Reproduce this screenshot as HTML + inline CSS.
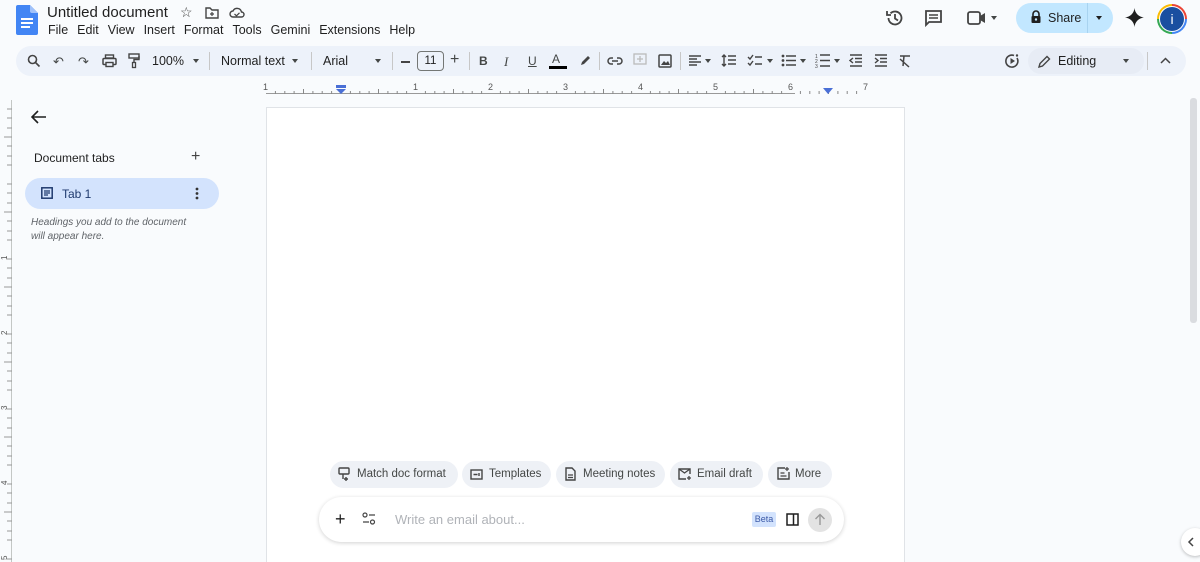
<!DOCTYPE html>
<html><head><meta charset="utf-8"><style>
*{margin:0;padding:0;box-sizing:border-box}
html,body{width:1200px;height:562px;overflow:hidden}
body{background:#f9fbfd;font-family:"Liberation Sans",sans-serif;color:#1f1f1f;position:relative}
.a{position:absolute}
.menu span{margin-right:9px}
.tb{position:absolute;top:46px;left:16px;width:1170px;height:30px;background:#edf2fa;border-radius:15px}
.t{position:absolute;font-size:12.5px;color:#444746;top:54px}
.sep{position:absolute;top:52px;width:1px;height:18px;background:#c7c7c7}
.dd{position:absolute;top:59px;width:0;height:0;border-left:3.5px solid transparent;border-right:3.5px solid transparent;border-top:4px solid #444746}
.chip{position:absolute;top:461px;height:27px;border-radius:14px;background:#eef1f6;font-size:11.5px;color:#444746;line-height:27px;padding-left:27px}
.rn{position:absolute;top:82px;font-size:9px;color:#555}
</style></head><body>
<svg class="a" style="left:16px;top:5px" width="22" height="30" viewBox="0 0 22 30"><path d="M2 0h12l8 8v20a2 2 0 0 1-2 2H2a2 2 0 0 1-2-2V2a2 2 0 0 1 2-2z" fill="#4285f4"/><path d="M14 0v6a2 2 0 0 0 2 2h6z" fill="#a1c2fa"/><rect x="5" y="13" width="12" height="2" fill="#fff"/><rect x="5" y="17" width="12" height="2" fill="#fff"/><rect x="5" y="21" width="9" height="2" fill="#fff"/></svg>
<div class="a" style="left:47px;top:4px;font-size:15px;color:#1f1f1f">Untitled document</div>
<div class="a" style="left:180px;top:4px;font-size:14px;color:#444">☆</div>
<svg class="a" style="left:205px;top:7px" width="14" height="12"><path d="M1 1h4l2 2h6v8H1z" fill="none" stroke="#444" stroke-width="1.4"/><path d="M7 5v4M5 7h4" stroke="#444" stroke-width="1.2"/></svg>
<svg class="a" style="left:229px;top:6px" width="16" height="13"><path d="M4 11a3 3 0 0 1 0-6 4.5 4.5 0 0 1 8.5 1 2.5 2.5 0 0 1 0 5z" fill="none" stroke="#444" stroke-width="1.4"/><path d="M5.5 8l2 1.8 3-3" fill="none" stroke="#444" stroke-width="1.2"/></svg>
<div class="a menu" style="left:48px;top:23px;font-size:12.5px;color:#1f1f1f"><span>File</span><span>Edit</span><span>View</span><span>Insert</span><span>Format</span><span>Tools</span><span>Gemini</span><span>Extensions</span><span>Help</span></div>
<svg class="a" style="left:885px;top:8px" width="20" height="20" viewBox="0 0 20 20"><path d="M3.5 10a6.5 6.5 0 1 0 2-4.7" fill="none" stroke="#444" stroke-width="1.8"/><path d="M2 3v4h4" fill="none" stroke="#444" stroke-width="1.8"/><path d="M10 6v4.5l3 2" fill="none" stroke="#444" stroke-width="1.8"/></svg>
<svg class="a" style="left:924px;top:9px" width="19" height="19" viewBox="0 0 19 19"><path d="M2 2h15v11H5l-3 3z" fill="none" stroke="#444" stroke-width="1.8"/><path d="M5 6h9M5 9h9" stroke="#444" stroke-width="1.5"/></svg>
<svg class="a" style="left:966px;top:9px" width="22" height="18" viewBox="0 0 22 18"><rect x="2" y="3" width="12" height="12" rx="2" fill="none" stroke="#444" stroke-width="1.8"/><path d="M14 7l5-3v10l-5-3z" fill="#444"/></svg>
<div class="dd" style="left:991px;top:16px"></div>
<div class="a" style="left:1016px;top:3px;width:97px;height:30px;border-radius:15px;background:#c2e7ff"></div>
<div class="a" style="left:1087px;top:3px;width:1px;height:30px;background:#a8d3f0"></div>
<svg class="a" style="left:1030px;top:10px" width="12" height="14" viewBox="0 0 12 14"><path d="M3 6V4a3 3 0 0 1 6 0v2" fill="none" stroke="#1f1f1f" stroke-width="1.6"/><rect x="1.5" y="6" width="9" height="7" rx="1" fill="#1f1f1f"/><circle cx="6" cy="9.5" r="1.2" fill="#c2e7ff"/></svg>
<div class="a" style="left:1048px;top:11px;font-size:12.5px;color:#1f1f1f">Share</div>
<div class="dd" style="left:1096px;top:16px;border-top-color:#1f1f1f"></div>
<svg class="a" style="left:1125px;top:8px" width="19" height="19" viewBox="0 0 20 20"><path d="M10 0C10.5 5.5 14.5 9.5 20 10 14.5 10.5 10.5 14.5 10 20 9.5 14.5 5.5 10.5 0 10 5.5 9.5 9.5 5.5 10 0z" fill="#1f1f1f"/></svg>
<div class="a" style="left:1157px;top:4px;width:30px;height:30px;border-radius:50%;background:conic-gradient(#ea4335 0 25%,#4285f4 0 50%,#34a853 0 75%,#fbbc04 0)"></div>
<div class="a" style="left:1159px;top:6px;width:26px;height:26px;border-radius:50%;background:#fff"></div>
<div class="a" style="left:1160px;top:7px;width:24px;height:24px;border-radius:50%;background:#1a4fa0;color:#fff;font-size:14px;text-align:center;line-height:24px">i</div>
<div class="tb"></div>
<svg class="a" style="left:27px;top:54px" width="14" height="14"><circle cx="5.5" cy="5.5" r="4" fill="none" stroke="#444" stroke-width="1.6"/><path d="M8.5 8.5l4 4" stroke="#444" stroke-width="1.6"/></svg>
<div class="t" style="left:53px;font-size:13px">↶</div>
<div class="t" style="left:78px;font-size:13px">↷</div>
<svg class="a" style="left:102px;top:54px" width="15" height="14"><rect x="3.5" y="1" width="8" height="3" fill="none" stroke="#444" stroke-width="1.4"/><rect x="1" y="4.5" width="13" height="6" rx="1" fill="none" stroke="#444" stroke-width="1.5"/><rect x="4" y="8.5" width="7" height="4" fill="#edf2fa" stroke="#444" stroke-width="1.4"/></svg>
<svg class="a" style="left:128px;top:53px" width="12" height="16"><rect x="1" y="1" width="10" height="4" fill="none" stroke="#444" stroke-width="1.4"/><path d="M11 3v3.5H6v3" fill="none" stroke="#444" stroke-width="1.4"/><rect x="4.5" y="9.5" width="3" height="5" fill="none" stroke="#444" stroke-width="1.3"/></svg>
<div class="t" style="left:152px;color:#1f1f1f">100%</div><div class="dd" style="left:193px"></div>
<div class="sep" style="left:209px"></div>
<div class="t" style="left:221px;color:#1f1f1f">Normal text</div><div class="dd" style="left:292px"></div>
<div class="sep" style="left:311px"></div>
<div class="t" style="left:323px;color:#1f1f1f">Arial</div><div class="dd" style="left:375px"></div>
<div class="sep" style="left:392px"></div>
<div class="a" style="left:401px;top:61px;width:9px;height:1.5px;background:#444"></div>
<div class="a" style="left:417px;top:51px;width:27px;height:20px;border:1px solid #747775;border-radius:4px;font-size:11.5px;text-align:center;line-height:18px;color:#1f1f1f">11</div>
<div class="t" style="left:450px;top:51px;font-size:16px">+</div>
<div class="sep" style="left:469px"></div>
<div class="t" style="left:479px;font-weight:bold;font-size:12px">B</div>
<div class="t" style="left:504px;font-style:italic;font-size:13px;font-family:'Liberation Serif',serif">I</div>
<div class="t" style="left:528px;text-decoration:underline;font-size:12px">U</div>
<div class="t" style="left:552px;top:52px;font-size:12px">A</div><div class="a" style="left:549px;top:66px;width:18px;height:3px;background:#000"></div>
<svg class="a" style="left:578px;top:54px" width="14" height="14"><path d="M3 11l1-3 6-6 2 2-6 6z" fill="#444"/></svg>
<div class="sep" style="left:599px"></div>
<svg class="a" style="left:607px;top:55px" width="16" height="12"><path d="M6 3H4a3 3 0 0 0 0 6h2M10 3h2a3 3 0 0 1 0 6h-2M5 6h6" fill="none" stroke="#444" stroke-width="1.5"/></svg>
<svg class="a" style="left:633px;top:53px" width="14" height="14"><rect x="1" y="1" width="12" height="10" fill="none" stroke="#bbb" stroke-width="1.3"/><path d="M7 3v6M4 6h6" stroke="#bbb" stroke-width="1.3"/></svg>
<svg class="a" style="left:658px;top:54px" width="14" height="14"><rect x="1" y="1" width="12" height="12" rx="1" fill="none" stroke="#444" stroke-width="1.5"/><path d="M3 11l3-4 2 2 2-2 2 4z" fill="#444"/></svg>
<div class="sep" style="left:680px"></div>
<svg class="a" style="left:688px;top:55px" width="14" height="12"><path d="M1 1h12M1 4h8M1 7h12M1 10h8" stroke="#444" stroke-width="1.5"/></svg><div class="dd" style="left:705px"></div>
<svg class="a" style="left:721px;top:54px" width="16" height="13"><path d="M3 1v11M1 3l2-2 2 2M1 10l2 2 2-2M7 2h8M7 6h8M7 10h8" fill="none" stroke="#444" stroke-width="1.4"/></svg>
<svg class="a" style="left:747px;top:54px" width="16" height="13"><path d="M1 3l2 2 3-4M1 9l2 2 3-4M8 3h7M8 10h7" fill="none" stroke="#444" stroke-width="1.4"/></svg><div class="dd" style="left:767px"></div>
<svg class="a" style="left:781px;top:54px" width="15" height="13"><circle cx="2" cy="2" r="1.4" fill="#444"/><circle cx="2" cy="6.5" r="1.4" fill="#444"/><circle cx="2" cy="11" r="1.4" fill="#444"/><path d="M5 2h10M5 6.5h10M5 11h10" stroke="#444" stroke-width="1.4"/></svg><div class="dd" style="left:800px"></div>
<svg class="a" style="left:815px;top:53px" width="15" height="15"><path d="M5 2h10M5 7.5h10M5 13h10" stroke="#444" stroke-width="1.4"/><text x="0" y="5" font-size="5" fill="#444">1</text><text x="0" y="10" font-size="5" fill="#444">2</text><text x="0" y="15" font-size="5" fill="#444">3</text></svg><div class="dd" style="left:834px"></div>
<svg class="a" style="left:849px;top:54px" width="14" height="13"><path d="M1 1h12M6 4.5h7M6 8h7M1 12h12M4 4L1 6.5 4 9" fill="none" stroke="#444" stroke-width="1.4"/></svg>
<svg class="a" style="left:874px;top:54px" width="14" height="13"><path d="M1 1h12M6 4.5h7M6 8h7M1 12h12M1 4l3 2.5L1 9" fill="none" stroke="#444" stroke-width="1.4"/></svg>
<svg class="a" style="left:898px;top:54px" width="14" height="14"><path d="M2 2h10M6 2l-1 10M2 5l9 8" fill="none" stroke="#444" stroke-width="1.5"/></svg>
<svg class="a" style="left:1004px;top:53px" width="16" height="16"><path d="M13 5a6 6 0 1 1-3-2.5" fill="none" stroke="#444" stroke-width="1.6"/><path d="M6.5 5v6l4.5-3z" fill="#444"/><circle cx="13" cy="2.5" r="1.2" fill="#444"/></svg>
<div class="a" style="left:1028px;top:48px;width:116px;height:26px;border-radius:13px;background:#e7ecf5"></div>
<svg class="a" style="left:1038px;top:55px" width="13" height="13"><path d="M1 12l1-3.5 7-7 2.5 2.5-7 7z" fill="none" stroke="#444" stroke-width="1.4"/></svg>
<div class="t" style="left:1058px;color:#1f1f1f">Editing</div><div class="dd" style="left:1123px"></div>
<div class="sep" style="left:1147px"></div>
<svg class="a" style="left:1160px;top:57px" width="11" height="8"><path d="M1 6l4.5-4.5L10 6" fill="none" stroke="#444" stroke-width="1.5"/></svg>
<div class="a" style="left:266px;top:93px;width:529px;height:1px;background:#999"></div>
<svg class="a" style="left:266px;top:86px" width="600" height="8">
<g stroke="#888" stroke-width="1">
<path d="M9.4 5v3M18.8 5v3M28.1 5v3M37.5 3v5M46.9 5v3M56.2 5v3M65.6 5v3M84.4 5v3M93.8 5v3M103.1 5v3M112.5 3v5M121.9 5v3M131.2 5v3M140.6 5v3M159.4 5v3M168.8 5v3M178.1 5v3M187.5 3v5M196.9 5v3M206.2 5v3M215.6 5v3M234.4 5v3M243.8 5v3M253.1 5v3M262.5 3v5M271.9 5v3M281.2 5v3M290.6 5v3M309.4 5v3M318.8 5v3M328.1 5v3M337.5 3v5M346.9 5v3M356.2 5v3M365.6 5v3M384.4 5v3M393.8 5v3M403.1 5v3M412.5 3v5M421.9 5v3M431.2 5v3M440.6 5v3M459.4 5v3M468.8 5v3M478.1 5v3M487.5 3v5M496.9 5v3M506.2 5v3M515.6 5v3M534.4 5v3M543.8 5v3M553.1 5v3M562.5 3v5M571.9 5v3M581.2 5v3M590.6 5v3"/></g></svg>
<div class="rn" style="left:263px">1</div><div class="rn" style="left:413px">1</div><div class="rn" style="left:488px">2</div><div class="rn" style="left:563px">3</div><div class="rn" style="left:638px">4</div><div class="rn" style="left:713px">5</div><div class="rn" style="left:788px">6</div><div class="rn" style="left:863px">7</div>
<svg class="a" style="left:335px;top:85px" width="12" height="9"><rect x="1" y="0" width="10" height="3" fill="#4a6fd6"/><path d="M1 4h10l-5 5z" fill="#4a6fd6"/></svg>
<svg class="a" style="left:823px;top:88px" width="10" height="7"><path d="M0 0h10l-5 6z" fill="#4a6fd6"/></svg>
<div class="a" style="left:11px;top:100px;width:1px;height:462px;background:#c4c7c5"></div>
<svg class="a" style="left:0;top:100px" width="12" height="462"><g stroke="#999"><path d="M7 9h5M7 18h5M7 28h5M4 37h8M7 46h5M7 56h5M7 65h5M7 84h5M7 93h5M7 103h5M4 112h8M7 121h5M7 131h5M7 140h5M7 159h5M7 168h5M7 178h5M4 187h8M7 196h5M7 206h5M7 215h5M7 234h5M7 243h5M7 253h5M4 262h8M7 271h5M7 281h5M7 290h5M7 309h5M7 318h5M7 328h5M4 337h8M7 346h5M7 356h5M7 365h5M7 384h5M7 393h5M7 403h5M4 412h8M7 421h5M7 431h5M7 440h5M7 459h5"/></g>
<text x="1" y="160" font-size="8" fill="#555" transform="rotate(-90 4 157)">1</text>
<text x="1" y="235" font-size="8" fill="#555" transform="rotate(-90 4 232)">2</text>
<text x="1" y="310" font-size="8" fill="#555" transform="rotate(-90 4 307)">3</text>
<text x="1" y="385" font-size="8" fill="#555" transform="rotate(-90 4 382)">4</text>
<text x="1" y="460" font-size="8" fill="#555" transform="rotate(-90 4 457)">5</text></svg>
<svg class="a" style="left:31px;top:110px" width="16" height="14"><path d="M15 7H2M7 1L1 7l6 6" fill="none" stroke="#1f1f1f" stroke-width="1.6"/></svg>
<div class="a" style="left:34px;top:151px;font-size:12px;color:#1f1f1f">Document tabs</div>
<div class="a" style="left:191px;top:148px;font-size:16px;color:#444">+</div>
<div class="a" style="left:25px;top:178px;width:194px;height:31px;border-radius:16px;background:#d3e3fd"></div>
<svg class="a" style="left:41px;top:187px" width="12" height="12"><rect x="0.8" y="0.8" width="10.4" height="10.4" fill="none" stroke="#1f3a6e" stroke-width="1.5"/><path d="M3 4h6M3 6h6M3 8h4" stroke="#1f3a6e" stroke-width="1.2"/></svg>
<div class="a" style="left:62px;top:187px;font-size:12px;color:#1f3a6e">Tab 1</div>
<svg class="a" style="left:195px;top:187px" width="4" height="13"><circle cx="2" cy="2" r="1.4" fill="#333"/><circle cx="2" cy="6.5" r="1.4" fill="#333"/><circle cx="2" cy="11" r="1.4" fill="#333"/></svg>
<div class="a" style="left:31px;top:216px;font-size:10px;font-style:italic;color:#5f6368;line-height:14px">Headings you add to the document<br>will appear here.</div>
<div class="a" style="left:266px;top:107px;width:639px;height:455px;background:#fff;border:1px solid #e0e3e7;border-bottom:none"></div>
<div class="a" style="left:1190px;top:98px;width:7px;height:225px;background:#dadce0;border-radius:3px"></div>
<div class="a" style="left:1181px;top:528px;width:28px;height:28px;border-radius:50%;background:#fff;box-shadow:0 1px 3px rgba(0,0,0,.25)"></div>
<svg class="a" style="left:1187px;top:537px" width="8" height="10"><path d="M6 1L2 5l4 4" fill="none" stroke="#444" stroke-width="1.5"/></svg>
<div class="chip" style="left:330px;width:128px">Match doc format</div>
<svg class="a" style="left:338px;top:467px" width="13" height="14"><rect x="1" y="1" width="10" height="6" rx="1" fill="none" stroke="#444" stroke-width="1.4"/><path d="M5 7v5M8 10v4M6 12h4" stroke="#444" stroke-width="1.4"/></svg>
<div class="chip" style="left:462px;width:89px">Templates</div>
<svg class="a" style="left:470px;top:469px" width="13" height="11"><rect x="1" y="1" width="11" height="9" fill="none" stroke="#444" stroke-width="1.4"/><path d="M3.5 5.5h4M9 4v3" stroke="#444" stroke-width="1.4"/></svg>
<div class="chip" style="left:556px;width:109px">Meeting notes</div>
<svg class="a" style="left:565px;top:467px" width="11" height="14"><path d="M1 1h6l3 3v9H1z" fill="none" stroke="#444" stroke-width="1.4"/><path d="M3 8h5M3 10.5h5" stroke="#444" stroke-width="1.2"/></svg>
<div class="chip" style="left:670px;width:93px">Email draft</div>
<svg class="a" style="left:678px;top:468px" width="14" height="12"><path d="M8 11H1V1h11v5" fill="none" stroke="#444" stroke-width="1.4"/><path d="M1 1l5.5 4L12 1M11 8v4M9 10h4" fill="none" stroke="#444" stroke-width="1.3"/></svg>
<div class="chip" style="left:768px;width:64px">More</div>
<svg class="a" style="left:777px;top:467px" width="13" height="13"><path d="M8 1H1v11h11V5" fill="none" stroke="#444" stroke-width="1.4"/><path d="M10 0v4M8 2h4M3.5 6h4M3.5 9h6" stroke="#444" stroke-width="1.2"/></svg>
<div class="a" style="left:319px;top:497px;width:525px;height:45px;border-radius:23px;background:#fff;box-shadow:0 1px 4px rgba(0,0,0,.18)"></div>
<div class="a" style="left:335px;top:509px;font-size:18px;color:#1f1f1f">+</div>
<svg class="a" style="left:362px;top:512px" width="14" height="14"><circle cx="3" cy="3" r="2" fill="none" stroke="#444" stroke-width="1.2"/><path d="M7 3h6M1 10h6" stroke="#444" stroke-width="1.3"/><circle cx="10.5" cy="10" r="2" fill="none" stroke="#444" stroke-width="1.2"/></svg>
<div class="a" style="left:395px;top:512px;font-size:13px;color:#b0b3b8">Write an email about...</div>
<div class="a" style="left:752px;top:512px;width:24px;height:15px;background:#d3e3fd;color:#3c5aa8;font-size:9px;text-align:center;line-height:15px;border-radius:2px">Beta</div>
<svg class="a" style="left:786px;top:513px" width="13" height="13"><rect x="1" y="1" width="11" height="11" fill="none" stroke="#1f1f1f" stroke-width="1.5"/><path d="M7.5 1v11" stroke="#1f1f1f" stroke-width="1.5"/></svg>
<div class="a" style="left:808px;top:508px;width:24px;height:24px;border-radius:50%;background:#e3e3e3"></div>
<svg class="a" style="left:814px;top:513px" width="12" height="13"><path d="M6 12V2M1.5 6L6 1.5 10.5 6" fill="none" stroke="#999" stroke-width="1.4"/></svg>
</body></html>
